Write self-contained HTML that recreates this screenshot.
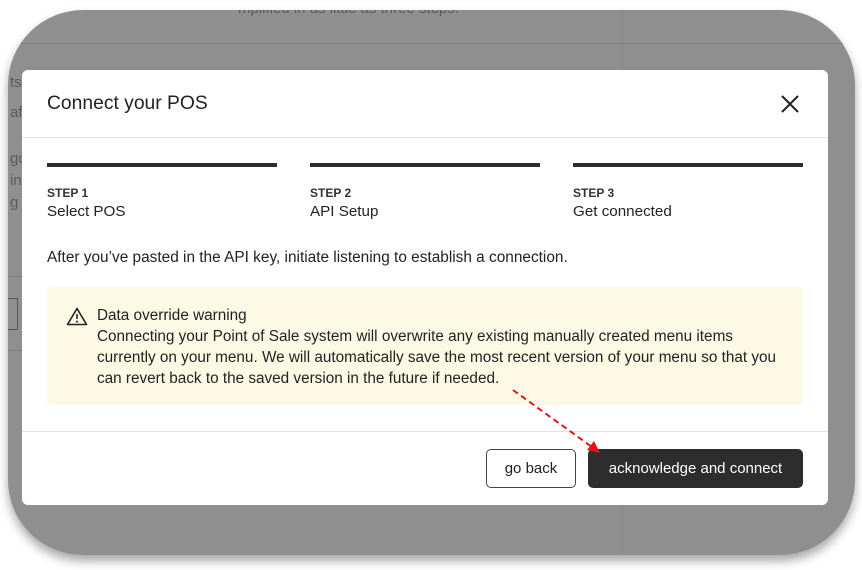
<!DOCTYPE html>
<html><head><style>
body{margin:0;width:862px;height:570px;background:#fff;position:relative;overflow:hidden;font-family:"Liberation Sans",sans-serif;}
.frame{position:absolute;left:8px;top:10px;width:847px;height:545px;border-radius:75px;background:#8f8f8f;overflow:hidden;box-shadow:0 6px 10px rgba(0,0,0,.35);}
.bgtxt{position:absolute;color:#5a5a5a;font-size:15px;}
.modal{position:absolute;left:22px;top:70px;width:806px;height:435px;background:#fff;border-radius:6px;}
.title{position:absolute;left:25px;top:23px;font-size:19.3px;color:#222;}
.hr{position:absolute;left:0;right:0;height:1px;background:#e3e3e3;}
.bar{position:absolute;top:93px;height:4px;background:#2d2d2d;width:230px;}
.step{position:absolute;top:116px;font-size:12px;font-weight:bold;color:#333;}
.sname{position:absolute;top:133px;font-size:15.2px;color:#222;}
.p{position:absolute;left:25px;top:179px;font-size:15.4px;color:#222;}
.warn{position:absolute;left:25px;top:217px;width:756px;height:118px;background:#fcf9e5;border-radius:4px;}
.warn div{position:absolute;left:50px;font-size:15.3px;color:#222;line-height:21px;}
.btn{position:absolute;top:379px;height:39px;border-radius:5px;font-size:15px;display:flex;align-items:center;justify-content:center;box-sizing:border-box;}
</style></head><body>
<div class="frame">
 <div style="position:absolute;left:0;right:0;top:33px;height:1px;background:#7e7e7e"></div>
 <div style="position:absolute;left:614px;top:0;bottom:0;width:1px;background:#858585"></div>
 <div style="position:absolute;left:0;width:22px;top:266px;height:1px;background:#7e7e7e"></div>
 <div style="position:absolute;left:0;width:22px;top:340px;height:1px;background:#7e7e7e"></div>
 <div style="position:absolute;left:-4px;width:12px;top:288px;height:30px;border:1px solid #555"></div>
 <div class="bgtxt" style="left:230px;top:-10px">mplified in as little as three steps.</div>
 <div class="bgtxt" style="left:2px;top:64px">ts</div>
 <div class="bgtxt" style="left:2px;top:94px">af</div>
 <div class="bgtxt" style="left:2px;top:140px">go</div>
 <div class="bgtxt" style="left:2px;top:162px">in</div>
 <div class="bgtxt" style="left:2px;top:184px">g i</div>
</div>
<div class="modal">
 <div class="title">Connect your POS</div>
 <svg style="position:absolute;left:759px;top:25px" width="18" height="18"><path d="M1 1L17 17M17 1L1 17" stroke="#222" stroke-width="2"/></svg>
 <div class="hr" style="top:67px"></div>
 <div class="bar" style="left:25px"></div><div class="bar" style="left:288px"></div><div class="bar" style="left:551px"></div>
 <div class="step" style="left:25px">STEP 1</div><div class="step" style="left:288px">STEP 2</div><div class="step" style="left:551px">STEP 3</div>
 <div class="sname" style="left:25px">Select POS</div><div class="sname" style="left:288px">API Setup</div><div class="sname" style="left:551px">Get connected</div>
 <div class="p">After you’ve pasted in the API key, initiate listening to establish a connection.</div>
 <div class="warn">
  <svg style="position:absolute;left:19px;top:20px" width="22" height="19"><path d="M11 1.5L20.5 17.5H1.5Z" fill="none" stroke="#222" stroke-width="1.6" stroke-linejoin="round"/><path d="M11 7v5" stroke="#222" stroke-width="1.6"/><circle cx="11" cy="14.6" r="1" fill="#222"/></svg>
  <div style="top:18px;white-space:nowrap">Data override warning<br>Connecting your Point of Sale system will overwrite any existing manually created menu items<br>currently on your menu. We will automatically save the most recent version of your menu so that you<br>can revert back to the saved version in the future if needed.</div>
 </div>
 <div class="hr" style="top:361px"></div>
 <div class="btn" style="left:464px;width:90px;border:1px solid #444;color:#222">go back</div>
 <div class="btn" style="left:566px;width:215px;background:#2d2d2d;color:#fff">acknowledge and connect</div>
</div>
<svg style="position:absolute;left:0;top:0" width="862" height="570"><path d="M513 390L592 447" stroke="#e0141a" stroke-width="2" stroke-dasharray="6 4"/><path d="M600 453L587 450L594 441Z" fill="#e0141a"/></svg>
</body></html>
